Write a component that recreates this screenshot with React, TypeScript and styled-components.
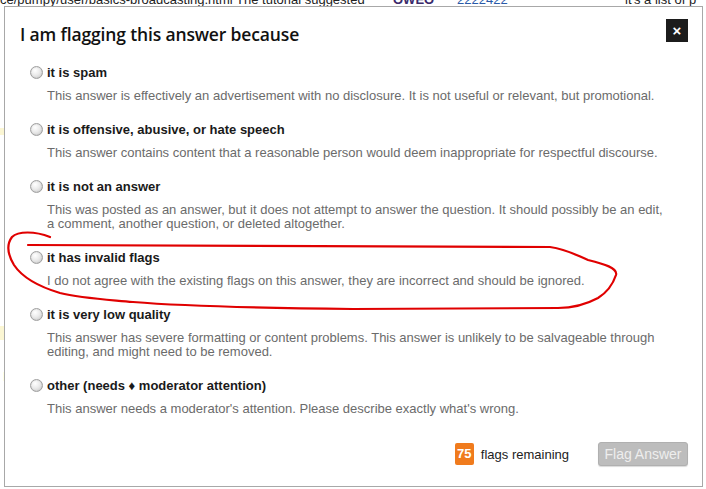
import React from 'react'
import styled, { createGlobalStyle } from 'styled-components'

const Global = createGlobalStyle`
	html, body {
		margin: 0;
		padding: 0;
		background: #fff;
	}
	body {
		font-family: "Liberation Sans", Arial, sans-serif;
	}
`

const Page = styled.div`
	position: relative;
	width: 706px;
	height: 489px;
	overflow: hidden;
	background: #fff;
	font-size: 13px;
	color: #222;
`

const BackTop = styled.div`
	display: flex;
	align-items: baseline;
	margin-top: -8px;
	height: 16px;
	white-space: nowrap;
	font-size: 13px;
	line-height: 16px;
`
const BackFrag = styled.span<{ $w: number; $color?: string; $bold?: boolean }>`
	flex: none;
	width: ${(p) => p.$w}px;
	color: ${(p) => p.$color || '#222'};
	font-weight: ${(p) => (p.$bold ? 'bold' : 'normal')};
	overflow: hidden;
`

const BackBody = styled.div`
	display: flex;
	justify-content: space-between;
	height: 473px;
`
const Gutter = styled.div<{ $align: string }>`
	display: flex;
	flex-direction: column;
	width: 12px;
	padding-top: 38px;
	gap: 12px;
	text-align: ${(p) => p.$align};
	font-size: 13px;
	line-height: 14px;
	color: #333;
`
const GutterMark = styled.div<{ $bg?: string; $color?: string }>`
	height: 14px;
	background: ${(p) => p.$bg || 'transparent'};
	color: ${(p) => p.$color || '#333'};
`

const Dialog = styled.div`
	position: absolute;
	left: 4px;
	top: 6px;
	width: 699px;
	height: 481px;
	box-sizing: border-box;
	border: 1px solid #a8a8a8;
	background: #fff;
	padding: 15px 14px 20px 15px;
	display: flex;
	flex-direction: column;
`

const Header = styled.div`
	display: flex;
	justify-content: space-between;
	align-items: flex-start;
`
const Title = styled.h1`
	margin: 0;
	font-family: "Open Sans", "DejaVu Sans", sans-serif;
	font-weight: 600;
	font-size: 17.5px;
	line-height: 24px;
	color: #111;
	letter-spacing: -0.15px;
`
const Close = styled.button`
	margin-top: -3px;
	width: 22px;
	height: 23px;
	padding: 0;
	border: none;
	background: #1c1c1c;
	color: #fff;
	font-family: "Liberation Sans", Arial, sans-serif;
	font-weight: bold;
	font-size: 15px;
	line-height: 23px;
	cursor: pointer;
`

const Options = styled.div`
	position: relative;
	display: flex;
	flex-direction: column;
	gap: 17px;
	margin-top: 17px;
	padding: 0 12px 0 10px;
`
const Option = styled.label`
	display: flex;
	flex-direction: column;
	gap: 8px;
`
const OptionHead = styled.div`
	display: flex;
	align-items: center;
	gap: 4px;
	height: 18px;
`
const Radio = styled.span`
	flex: none;
	width: 11px;
	height: 11px;
	border-radius: 50%;
	border: 1px solid #a0a0a0;
	background: radial-gradient(circle at 38% 32%, #ffffff 0%, #ebebeb 45%, #c4c4c4 100%);
	box-shadow: inset 0 0 1px rgba(0, 0, 0, 0.2);
`
const OptionTitle = styled.span`
	font-weight: bold;
	font-size: 13px;
	color: #1a1a1a;
`
const OptionDesc = styled.div`
	margin-left: 17px;
	max-width: 625px;
	font-size: 13px;
	line-height: 14px;
	color: #6b6b6b;
`

const Scribble = styled.svg`
	position: absolute;
	left: -20px;
	top: 0;
	pointer-events: none;
	overflow: visible;
`

const Footer = styled.div`
	margin-top: auto;
	display: flex;
	justify-content: flex-end;
	align-items: center;
`
const Remaining = styled.div`
	display: flex;
	align-items: center;
	gap: 7px;
	margin-right: 29px;
	font-size: 13px;
	color: #222;
`
const Badge = styled.span`
	display: inline-block;
	width: 19px;
	height: 22px;
	line-height: 22px;
	border-radius: 2px;
	background: #f07b1d;
	color: #fff;
	font-weight: bold;
	font-size: 13px;
	text-align: center;
`
const FlagButton = styled.button`
	width: 90px;
	height: 24px;
	padding: 0;
	border: 1px solid #b0b0b0;
	border-radius: 3px;
	background: #bdbdbd;
	box-shadow: 0 1px 1px rgba(0, 0, 0, 0.15);
	color: #eeeeee;
	font-family: "Liberation Sans", Arial, sans-serif;
	font-size: 14px;
`

const options = [
	{
		title: 'it is spam',
		desc: 'This answer is effectively an advertisement with no disclosure. It is not useful or relevant, but promotional.',
	},
	{
		title: 'it is offensive, abusive, or hate speech',
		desc: 'This answer contains content that a reasonable person would deem inappropriate for respectful discourse.',
	},
	{
		title: 'it is not an answer',
		desc: 'This was posted as an answer, but it does not attempt to answer the question. It should possibly be an edit, a comment, another question, or deleted altogether.',
	},
	{
		title: 'it has invalid flags',
		desc: 'I do not agree with the existing flags on this answer, they are incorrect and should be ignored.',
	},
	{
		title: 'it is very low quality',
		desc: 'This answer has severe formatting or content problems. This answer is unlikely to be salvageable through editing, and might need to be removed.',
	},
	{
		title: 'other (needs \u2666 moderator attention)',
		desc: "This answer needs a moderator's attention. Please describe exactly what's wrong.",
	},
]

export default function App() {
	// red hand-drawn loop; x = page x, y = page y - 63
	const loop =
		'M 28 182 L 550 184 C 566 186, 576 192, 588 197 C 604 201, 618 205, 616 212 ' +
		'C 612 224, 606 230, 598 235 C 585 242, 572 245, 558 245 L 353 246 ' +
		'C 260 245, 170 242, 133 239 C 100 236, 80 235, 60 230 C 40 224, 22 214, 14 202 ' +
		'C 8 192, 6 182, 12 174 C 18 168, 35 168, 50 174'
	return (
		<Page>
			<Global />
			<BackTop>
				<BackFrag $w={393}>ce/pumpy/user/basics-broadcasting.html The tutorial suggested</BackFrag>
				<BackFrag $w={64} $color="#3b2a6b" $bold>
					OWEO
				</BackFrag>
				<BackFrag $w={168} $color="#2a5aa8">
					2222422
				</BackFrag>
				<BackFrag $w={81}>it's a list of p</BackFrag>
			</BackTop>
			<BackBody>
				<Gutter $align="right">
					<GutterMark>u</GutterMark>
					<GutterMark />
					<GutterMark />
					<GutterMark />
					<GutterMark $bg="#fbf6d3" />
					<GutterMark />
					<GutterMark />
					<GutterMark>o</GutterMark>
					<GutterMark>e</GutterMark>
					<GutterMark>n</GutterMark>
					<GutterMark>t</GutterMark>
					<GutterMark />
					<GutterMark />
					<GutterMark $bg="#fbf6d3">e</GutterMark>
					<GutterMark />
					<GutterMark>B</GutterMark>
					<GutterMark>r</GutterMark>
					<GutterMark />
					<GutterMark>e</GutterMark>
					<GutterMark>c</GutterMark>
				</Gutter>
				<Gutter $align="left">
					<GutterMark $color="#8a3a1a">r</GutterMark>
					<GutterMark $color="#c07a2a">:</GutterMark>
					<GutterMark $color="#444">)</GutterMark>
					<GutterMark />
					<GutterMark $color="#2a5aa8">r</GutterMark>
					<GutterMark $color="#2a5aa8">-</GutterMark>
					<GutterMark>:</GutterMark>
					<GutterMark>:</GutterMark>
					<GutterMark />
					<GutterMark>s</GutterMark>
					<GutterMark>e</GutterMark>
					<GutterMark />
					<GutterMark />
					<GutterMark />
					<GutterMark />
					<GutterMark $color="#8a3a1a">r</GutterMark>
					<GutterMark $color="#2a5aa8">c</GutterMark>
				</Gutter>
			</BackBody>

			<Dialog>
				<Header>
					<Title>I am flagging this answer because</Title>
					<Close aria-label="close">×</Close>
				</Header>
				<Options>
					{options.map((o) => (
						<Option key={o.title}>
							<OptionHead>
								<Radio />
								<OptionTitle>{o.title}</OptionTitle>
							</OptionHead>
							<OptionDesc>{o.desc}</OptionDesc>
						</Option>
					))}
					<Scribble width="1" height="1">
						<path d={loop} fill="none" stroke="#e00000" strokeWidth="2.2" strokeLinecap="round" strokeLinejoin="round" />
					</Scribble>
				</Options>
				<Footer>
					<Remaining>
						<Badge>75</Badge>
						<span>flags remaining</span>
					</Remaining>
					<FlagButton disabled>Flag Answer</FlagButton>
				</Footer>
			</Dialog>
		</Page>
	)
}
